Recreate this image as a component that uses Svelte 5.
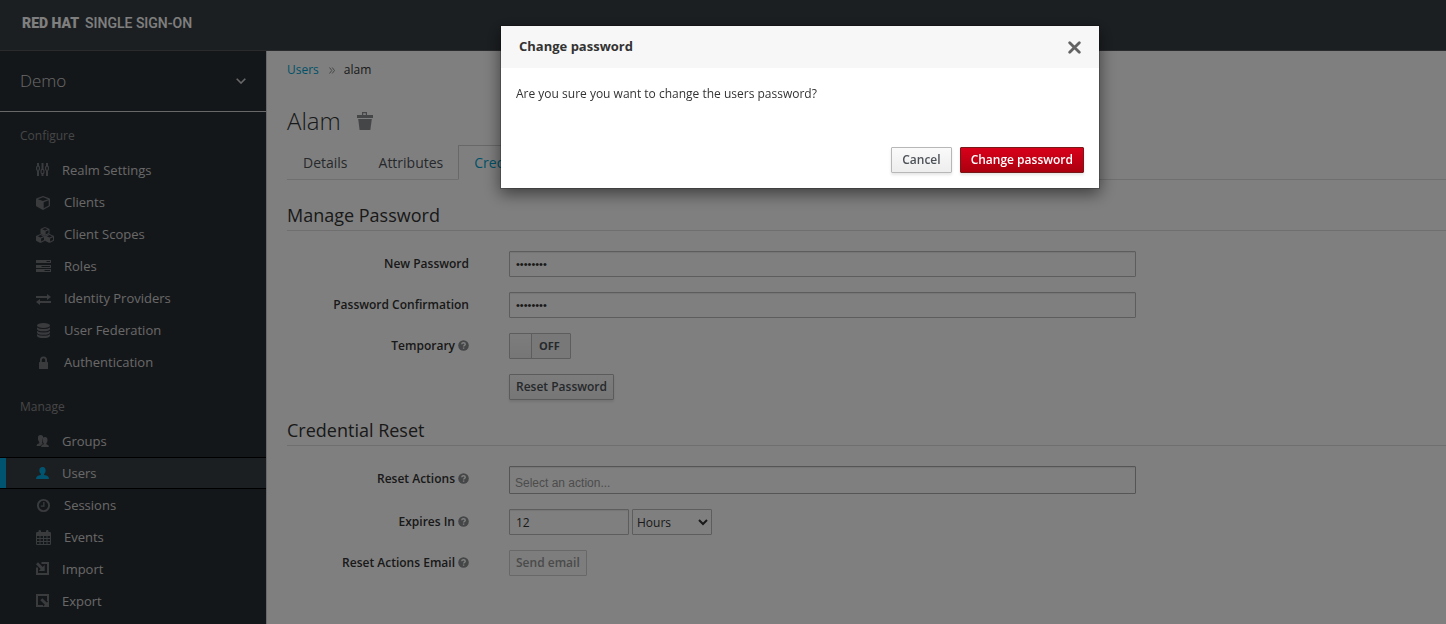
<script>
  const configure = [
    { label: 'Realm Settings', icon: 'sliders', wide: false },
    { label: 'Clients', icon: 'cube', wide: true },
    { label: 'Client Scopes', icon: 'cubes', wide: true },
    { label: 'Roles', icon: 'tasks', wide: true },
    { label: 'Identity Providers', icon: 'exchange', wide: true },
    { label: 'User Federation', icon: 'database', wide: true },
    { label: 'Authentication', icon: 'lock', wide: true }
  ];
  const manage = [
    { label: 'Groups', icon: 'users', wide: false },
    { label: 'Users', icon: 'user', wide: false, active: true },
    { label: 'Sessions', icon: 'clock', wide: true },
    { label: 'Events', icon: 'calendar', wide: true },
    { label: 'Import', icon: 'import', wide: false },
    { label: 'Export', icon: 'export', wide: false }
  ];
  const sections = [
    { title: 'Configure', items: configure },
    { title: 'Manage', items: manage }
  ];
  let password = $state('password');
  let confirmation = $state('password');
  let expires = $state('12');
</script>

{#snippet icon(name)}
  <svg class="icon" class:low={['cube', 'cubes', 'exchange', 'clock', 'database', 'lock', 'calendar', 'tasks', 'users', 'user'].includes(name)} width="18" height="16" viewBox="0 0 18 16" fill="currentColor" aria-hidden="true">
    {#if name === 'sliders'}
      <path d="M1 1h2v3H1zM1 9h2v5H1zM5.500 1h2v6.500h-2zM5.500 12h2v2h-2zM10 1h2v3h-2zM10 9h2v5h-2z" />
      <g fill="none" stroke="currentColor" stroke-width="1.200"><rect x=".6" y="4.200" width="2.800" height="4.200" rx="1.200" /><rect x="5.100" y="7.400" width="2.800" height="4.200" rx="1.200" /><rect x="9.600" y="4.200" width="2.800" height="4.200" rx="1.200" /></g>
    {:else if name === 'cube'}
      <path fill-rule="evenodd" d="M7 1l6.300 2.300q.7.300.7 1v6.300q0 .6-.6 1L7.500 14.800q-.5.300-1 0L.6 11.600q-.6-.3-.6-1V4.300q0-.7.7-1zM7 2.300L1.900 4.200 7 6.100l5.100-1.900zM7.700 7.200v6l5-2.700V5.300z" />
    {:else if name === 'cubes'}
      <g>
        {#each [[4.5, 0], [0, 7], [9, 7]] as [x, y]}
          <path transform={`translate(${x} ${y})`} fill-rule="evenodd" d="M4.500 0l4 1.700q.5.200.5.800v3.700q0 .5-.5.800L5 8.700q-.5.200-1 0L.5 7Q0 6.700 0 6.200V2.500q0-.6.500-.8zM4.500 1L1.700 2.200l2.800 1.200 2.800-1.200zM5.100 4.400v3.200L8 6.100V3.200z" />
        {/each}
      </g>
    {:else if name === 'tasks'}
      <path fill-rule="evenodd" d="M0 1h15v3H0zM10.500 2v1H14V2zM0 6h15v3H0zM5.500 7v1H14V7zM0 10h15v3H0zM8.500 11v1H14v-1z" />
    {:else if name === 'exchange'}
      <path d="M0 4h11V2l4 3-4 3V6H0zM15 9v2H4v2l-4-3 4-3v2z" transform="translate(0 1)" />
    {:else if name === 'database'}
      <ellipse cx="7.500" cy="2.500" rx="6.500" ry="2.500" />
      <path d="M1 4.400q2 1.500 6.500 1.500T14 4.400v1.500q-.5 2.300-6.500 2.300T1 5.900zM1 7.900q2 1.500 6.500 1.500T14 7.900v1.500q-.5 2.300-6.500 2.300T1 9.400zM1 11.300q2 1.500 6.500 1.500t6.500-1.500v1.400q-.5 2.300-6.500 2.300T1 12.700z" />
    {:else if name === 'lock'}
      <path fill-rule="evenodd" d="M4 7V5a3.500 3.500 0 017 0v2h.4q.6 0 .6.600v5.800q0 .6-.6.600H3.600q-.6 0-.6-.6V7.600Q3 7 3.600 7zm1.800 0h3.400V5a1.700 1.700 0 00-3.400 0z" />
    {:else if name === 'users'}
      <path d="M4.500 1c2 0 2.800 1.300 2.800 2.900Q6 5 6 7q0 2 .8 3.300Q5 10.500 4.300 12H.5q0-2.200 2.800-2.800.2-.9-.4-1.600Q1.900 6.500 1.900 4c0-1.700.8-3 2.600-3z" />
      <path d="M9 3c1.700 0 2.500 1.300 2.500 3 0 1.400-.4 2.500-1.100 3.200v1q2.600.5 2.600 2.800H5q0-2.300 2.700-2.800v-1C6.900 8.500 6.500 7.400 6.500 6c0-1.700.8-3 2.500-3z" />
    {:else if name === 'user'}
      <path d="M6.500 1c2.200 0 3.100 1.500 3.100 3.400 0 1.500-.6 2.800-1.500 3.500v1.200q4.900.7 4.900 3.900H0q0-3.200 4.900-3.900V7.900C4 7.200 3.400 5.900 3.400 4.400 3.400 2.500 4.300 1 6.500 1z" />
    {:else if name === 'clock'}
      <circle cx="7.500" cy="7.500" r="5.600" fill="none" stroke="currentColor" stroke-width="1.900" />
      <path d="M7.200 4h1.300v4.700H4.800V7.500h2.400z" />
    {:else if name === 'calendar'}
      <path fill-rule="evenodd" d="M1.200 2H2.500V1q0-1 1.200-1T5 1v1h5V1q0-1 1.200-1t1.300 1v1h1.300q1.200 0 1.200 1.200v10.600q0 1.200-1.200 1.200H1.200Q0 15 0 13.800V3.200Q0 2 1.200 2zM1 6v2h2.500V6zm3.500 0v2H7V6zM8 6v2h2.500V6zm3.500 0v2H14V6zM1 9v2h2.500V9zm3.500 0v2H7V9zM8 9v2h2.500V9zm3.500 0v2H14V9zM1 12v2h2.500v-2zm3.500 0v2H7v-2zM8 12v2h2.500v-2zm3.500 0v2H14v-2z" />
    {:else if name === 'import'}
      <path d="M5.500 1H13v13H0V6.500h2V12h9V3H5.500z" />
      <path d="M2 1.300l4.700 4.700L8.700 4v6H2.700l2-2L0 3.300z" />
    {:else if name === 'export'}
      <path d="M0 1h13v7h-2V3H2v9h5v2H0z" />
      <path d="M6.300 5.200l4.400 4.400L13 7.300V14H6.700l2.200-2.200-4.600-4.600z" />
    {/if}
  </svg>
{/snippet}

{#snippet help()}
  <svg class="help" width="11" height="11" viewBox="0 0 11 11" aria-hidden="true">
    <circle cx="5.500" cy="5.500" r="5.300" fill="currentColor" />
    <path d="M3.700 4.300Q3.800 2.700 5.500 2.700T7.300 4.200Q7.300 5 6.300 5.500 5.600 5.900 5.600 6.500M5.600 7.400v1.300" fill="none" stroke="#fff" stroke-width="1.400" />
  </svg>
{/snippet}

<div class="page">
  <header class="topbar">
    <a class="brand" href="#home"><strong>RED HAT</strong><span>SINGLE SIGN-ON</span></a>
  </header>

  <div class="columns">
    <nav class="sidebar">
      <button class="realm" type="button">
        <span>Demo</span>
        <svg width="10" height="6" viewBox="0 0 10 6" fill="none" stroke="currentColor" stroke-width="1.600" aria-hidden="true"><path d="M.7.7L5 5 9.300.7" /></svg>
      </button>
      {#each sections as section}
        <section class="group">
          <h2>{section.title}</h2>
          <ul>
            {#each section.items as item}
              <li>
                <a href="#nav" class:active={item.active}>
                  <span class="slot" class:wide={item.wide}>{@render icon(item.icon)}</span>
                  {item.label}
                </a>
              </li>
            {/each}
          </ul>
        </section>
      {/each}
    </nav>

    <main>
      <ol class="crumbs">
        <li><a href="#users">Users</a></li>
        <li class="sep" aria-hidden="true">
          <svg width="6" height="7" viewBox="0 0 6 7" fill="none" stroke="currentColor"><path d="M.5.5l2.300 3-2.300 3M3.200.5l2.300 3-2.300 3" /></svg>
        </li>
        <li>alam</li>
      </ol>

      <h1>
        Alam
        <button class="trash" type="button" aria-label="Delete user">
          <svg width="16" height="18" viewBox="0 0 16 18" fill="currentColor" aria-hidden="true"><path fill-rule="evenodd" d="M5 0h5v3h6v3H0V3h5zM6.200 1.200V3h2.600V1.200z" /><path d="M1.200 7h13.600l-1.400 11H2.600z" /></svg>
        </button>
      </h1>

      <ul class="tabs">
        <li><a href="#details">Details</a></li>
        <li><a href="#attributes">Attributes</a></li>
        <li><a href="#credentials" class="current">Credentials</a></li>
      </ul>

      <form onsubmit={(e) => e.preventDefault()}>
        <fieldset>
          <legend>Manage Password</legend>
          <div class="row">
            <label for="new">New Password</label>
            <div class="field"><input id="new" type="password" bind:value={password} /></div>
          </div>
          <div class="row">
            <label for="confirm">Password Confirmation</label>
            <div class="field"><input id="confirm" type="password" bind:value={confirmation} /></div>
          </div>
          <div class="row">
            <label for="temporary">Temporary {@render help()}</label>
            <div class="field">
              <label class="switch"><input id="temporary" type="checkbox" /><span class="knob"></span><span class="off">OFF</span></label>
            </div>
          </div>
          <div class="row">
            <span></span>
            <div class="field"><button class="btn" type="button">Reset Password</button></div>
          </div>
        </fieldset>

        <fieldset>
          <legend>Credential Reset</legend>
          <div class="row">
            <label for="actions">Reset Actions {@render help()}</label>
            <div class="field"><input id="actions" class="picker" type="text" placeholder="Select an action..." /></div>
          </div>
          <div class="row">
            <label for="expires">Expires In {@render help()}</label>
            <div class="field">
              <input id="expires" class="short" type="text" bind:value={expires} />
              <select aria-label="Unit"><option>Hours</option></select>
            </div>
          </div>
          <div class="row">
            <label for="send">Reset Actions Email {@render help()}</label>
            <div class="field"><button id="send" class="btn" type="button" disabled>Send email</button></div>
          </div>
        </fieldset>
      </form>
    </main>
  </div>

  <div class="backdrop">
    <div class="modal" role="dialog" aria-modal="true" aria-labelledby="modal-title">
      <div class="modal-head">
        <h4 id="modal-title">Change password</h4>
        <button class="close" type="button" aria-label="Close">
          <svg width="13" height="13" viewBox="0 0 13 13" fill="none" stroke="currentColor" stroke-width="2.800" stroke-linecap="round" aria-hidden="true"><path d="M1.700 1.700l9.600 9.600M11.300 1.700l-9.600 9.600" /></svg>
        </button>
      </div>
      <p>Are you sure you want to change the users password?</p>
      <div class="modal-foot">
        <button class="btn roomy" type="button">Cancel</button>
        <button class="btn roomy danger" type="button">Change password</button>
      </div>
    </div>
  </div>
</div>

<style>
  :global(body) {
    margin: 0;
    overflow: hidden;
  }
  * {
    box-sizing: border-box;
  }
  ul,
  ol {
    list-style: none;
    margin: 0;
    padding: 0;
  }
  a {
    color: #00a3d1;
    text-decoration: none;
  }
  .page {
    min-height: 100vh;
    display: flex;
    flex-direction: column;
    font: 12px/20px 'Open Sans', sans-serif;
    color: #333;
    background: #fff;
  }
  button,
  input,
  select {
    font: inherit;
    color: inherit;
  }
  .topbar {
    display: flex;
    padding: 13px 22px 17px;
    background: #393f44;
    border-bottom: 1px solid #53565b;
  }
  .brand {
    display: flex;
    gap: 6px;
    font-family: Roboto, sans-serif;
    font-size: 14px;
    font-weight: 500;
    color: #fff;
  }
  .brand strong {
    font-weight: 900;
  }
  .columns {
    flex: 1;
    display: flex;
  }
  .sidebar {
    flex: none;
    width: 267px;
    background: #292e34;
    border-right: 1px solid #d1d1d1;
  }
  .realm {
    display: flex;
    align-items: center;
    justify-content: space-between;
    width: 100%;
    height: 61px;
    padding: 0 20px;
    border: 0;
    border-bottom: 1px solid #d1d1d1;
    background: none;
    color: #d1d1d1;
    font-size: 17px;
    font-weight: 300;
  }
  .group {
    padding-top: 14px;
  }
  .group h2 {
    margin: 0 0 8px;
    padding-left: 20px;
    font-size: 12px;
    font-weight: 400;
    color: #8b8d8f;
  }
  .group ul {
    margin-bottom: 5px;
  }
  .group a {
    display: flex;
    align-items: center;
    height: 32px;
    padding-left: 36px;
    font-size: 13px;
    color: #d1d1d1;
  }
  .group a.active {
    background: #393f44;
    border: solid #000;
    border-width: 1px 0;
    box-shadow: inset 6px 0 #00a8e1;
  }
  .slot {
    display: flex;
    width: 26px;
    color: #72767b;
  }
  .slot.wide {
    width: 28px;
  }
  .active .slot {
    color: #00a8e1;
  }
  .low {
    margin-top: 2px;
  }
  main {
    flex: 1;
    min-width: 0;
    padding-top: 9px;
  }
  .crumbs {
    display: flex;
    align-items: center;
    padding-left: 20px;
  }
  .sep {
    display: flex;
    margin: 0 9px 0 10px;
    color: #8b8d8f;
  }
  h1 {
    display: flex;
    align-items: center;
    gap: 16px;
    margin: 26px 0 10px 20px;
    font-size: 24px;
    line-height: 29px;
    font-weight: 300;
  }
  .trash {
    display: flex;
    padding: 0;
    border: 0;
    background: none;
    color: #8b8d8f;
  }
  .tabs {
    display: flex;
    margin-left: 20px;
    border-bottom: 1px solid #dedede;
    font-size: 14px;
  }
  .tabs a {
    display: block;
    margin: 0 -1px -1px 0;
    padding: 7px 15px 6px;
    border: 1px solid transparent;
    color: #4d5258;
  }
  .tabs a.current {
    border-color: #d1d1d1;
    border-bottom-color: #fff;
    color: #00a3d1;
  }
  fieldset {
    display: flex;
    flex-direction: column;
    gap: 15px;
    min-width: 0;
    margin: 0;
    padding: 20px 0 0;
    border: 0;
  }
  legend {
    width: calc(100% - 20px);
    margin-left: 20px;
    padding: 25px 0 5px;
    border-bottom: 1px solid #dedede;
    font-size: 18px;
    line-height: 20px;
  }
  fieldset + fieldset legend {
    padding-top: 20px;
  }
  .row {
    display: grid;
    grid-template-columns: 222fr 667fr 290fr;
  }
  .row > label {
    display: flex;
    justify-content: flex-end;
    gap: 3px;
    padding: 3px 20px;
    font-weight: 600;
    white-space: nowrap;
  }
  .help {
    margin-top: 4px;
    color: #8b8d8f;
  }
  .field {
    display: flex;
    gap: 3px;
    padding: 0 20px;
  }
  .field input[type='password'],
  .field input[type='text'] {
    width: 100%;
    height: 26px;
    padding: 2px 6px;
    border: 1px solid #bbb;
    border-radius: 1px;
    background: #fff;
    box-shadow: inset 0 1px 1px rgba(0, 0, 0, 0.08);
  }
  .field input[type='password'] {
    font-family: 'Liberation Sans', sans-serif;
    font-size: 11px;
  }
  .field input.short {
    width: 120px;
  }
  .field input.picker {
    height: 28px;
    padding: 6px 5px 0;
    border-color: #aaa;
    font-family: 'Liberation Sans', sans-serif;
  }
  .picker::placeholder {
    color: #999;
  }
  select {
    width: 80px;
    height: 26px;
    border: 1px solid #bbb;
    border-radius: 1px;
    background: #fff;
  }
  .switch {
    display: flex;
    width: 62px;
    height: 26px;
    border: 1px solid #bbb;
    border-radius: 1px;
    background: #f1f1f1;
    font-size: 11px;
    line-height: 24px;
    font-weight: 700;
    color: #4d5258;
  }
  .switch input {
    appearance: none;
    width: 0;
    margin: 0;
  }
  .knob {
    width: 22px;
    border-right: 1px solid #bbb;
    background: linear-gradient(#fafafa, #ededed);
  }
  .off {
    flex: 1;
    padding-left: 7px;
  }
  .btn {
    height: 26px;
    padding: 2px 6px;
    border: 1px solid #b7b7b7;
    border-radius: 1px;
    background: linear-gradient(#fafafa, #ededed);
    box-shadow: 0 2px 3px rgba(0, 0, 0, 0.1);
    font-weight: 600;
    color: #4d5258;
  }
  .btn:disabled {
    background: #fafafa;
    border-color: #d1d1d1;
    box-shadow: none;
    color: #969696;
  }
  .btn.roomy {
    padding: 2px 10px;
  }
  .btn.danger {
    background: linear-gradient(#d9001b, #ab000f);
    border-color: #781919;
    color: #fff;
  }
  .backdrop {
    position: fixed;
    inset: 0;
    display: flex;
    align-items: flex-start;
    justify-content: center;
    padding: 25px 0 0 154px;
    background: rgba(0, 0, 0, 0.5);
  }
  .modal {
    width: 600px;
    max-width: 100%;
    border: 1px solid rgba(0, 0, 0, 0.2);
    background: #fff;
    background-clip: padding-box;
    box-shadow: 0 5px 15px rgba(0, 0, 0, 0.5);
  }
  .modal-head {
    display: flex;
    align-items: center;
    justify-content: space-between;
    padding: 10px 18px 12px;
    background: #f7f7f7;
  }
  .modal h4 {
    margin: 0;
    font-size: 13px;
    line-height: 20px;
    font-weight: 700;
  }
  .close {
    display: flex;
    padding: 2px 0 0;
    border: 0;
    background: none;
    color: #636363;
  }
  .modal p {
    margin: 0;
    padding: 16px 15px 43px;
  }
  .modal-foot {
    display: flex;
    justify-content: flex-end;
    gap: 8px;
    padding: 0 15px 15px;
  }
</style>
